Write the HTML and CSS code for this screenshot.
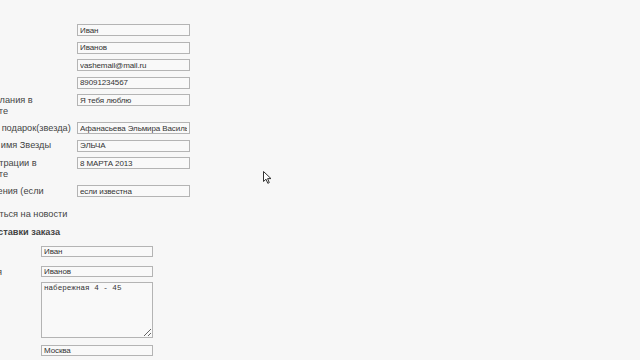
FILE: index.html
```html
<!DOCTYPE html>
<html lang="ru">
<head>
  <meta charset="UTF-8" />
  <title>Оформление заказа</title>
  <link rel="stylesheet" href="styles.css">
</head>
<body>
  <div class="order">
    <div class="row">
      <label for="name">Имя</label>
      <input type="text" id="name" value="Иван" />
    </div>
    <div class="row">
      <label for="surname">Фамилия</label>
      <input type="text" id="surname" value="Иванов" />
    </div>
    <div class="row">
      <label for="email">E-mail</label>
      <input type="text" id="email" value="vashemail@mail.ru" />
    </div>
    <div class="row">
      <label for="phone">Телефон</label>
      <input type="text" id="phone" value="89091234567" />
    </div>
    <div class="row">
      <label for="wish">Текст пожелания в сертификате</label>
      <input type="text" id="wish" value="Я тебя люблю" />
    </div>
    <div class="row">
      <label for="owner">ФИО, кому подарок(звезда)</label>
      <input type="text" id="owner" value="Афанасьева Эльмира Васильевна" />
    </div>
    <div class="row">
      <label for="star">Желаемое имя Звезды</label>
      <input type="text" id="star" value="ЭЛЬЧА" />
    </div>
    <div class="row">
      <label for="regdate">Дата регистрации в сертификате</label>
      <input type="text" id="regdate" value="8 МАРТА 2013" />
    </div>
    <div class="row">
      <label for="birth">Дата рождения (если известна)</label>
      <input type="text" id="birth" value="если известна" />
    </div>
    <div class="row news">
      <label><input type="checkbox" />Подписаться на новости</label>
    </div>

    <h3>Адрес доставки заказа</h3>

    <div class="delivery">
      <div class="row">
        <label for="d-name">Имя</label>
        <input type="text" id="d-name" value="Иван" />
      </div>
      <div class="row">
        <label for="d-surname">Фамилия</label>
        <input type="text" id="d-surname" value="Иванов" />
      </div>
      <div class="row">
        <label for="d-address">Адрес</label>
        <textarea id="d-address">набережная 4 - 45</textarea>
      </div>
      <div class="row">
        <label for="d-city">Город</label>
        <input type="text" id="d-city" value="Москва" />
      </div>
    </div>
  </div>

  <!-- mouse pointer from the capture -->
  <svg class="cursor" width="9" height="13" viewBox="0 0 9 13">
    <path d="M0.5 0.5 L0.5 10.5 L3 8.2 L4.8 12.3 L6.3 11.6 L4.6 7.6 L8 7.6 Z" fill="#fff" stroke="#333" stroke-width="1" />
  </svg>
</body>
</html>
```

FILE: styles.css
```css
body {
  margin: 0;
  background: #f7f7f7;
  font-family: Arial, "Liberation Sans", sans-serif;
  color: #444;
  overflow: hidden;
}
.order {
  margin-left: -47px;
  padding-top: 24px;
}
.row {
  display: flex;
  align-items: flex-start;
  gap: 4px;
  margin-bottom: 5.5px;
}
.row label {
  width: 120px;
  flex-shrink: 0;
  font-size: 9.2px;
  line-height: 11px;
  padding-top: 0.5px;
}
input[type="text"], textarea {
  box-sizing: border-box;
  width: 113px;
  height: 12px;
  margin: 0;
  padding: 0 2px;
  border: 1px solid #b4b4b4;
  border-radius: 0;
  background: #f9f9f9;
  color: #333;
  font-family: Arial, "Liberation Sans", sans-serif;
  font-size: 8px;
  letter-spacing: -0.1px;
}
.news {
  margin-top: -5px;
}
.news label {
  width: auto;
}
.news input {
  width: 9px;
  height: 9px;
  margin: 0 1px 0 0;
  vertical-align: -1px;
}
h3 {
  margin: 6px 0 0 3px;
  font-size: 9.2px;
  line-height: 12px;
}
.delivery {
  margin-left: 10px;
  padding-top: 8px;
}
.delivery .row {
  gap: 6px;
}
.delivery .row label {
  width: 72px;
}
.delivery input[type="text"] {
  width: 112px;
  height: 11px;
}
.delivery .row:nth-child(1) {
  margin-bottom: 9px;
}
.delivery .row:nth-child(2) {
  margin-bottom: 4px;
}
.delivery .row:nth-child(3) {
  margin-bottom: 7px;
}
textarea {
  width: 112px;
  height: 56px;
  padding: 1px 2px;
  font-family: "Liberation Mono", "Courier New", monospace;
  font-size: 7.6px;
  line-height: 8px;
  letter-spacing: 0;
}
.cursor {
  position: absolute;
  left: 263px;
  top: 171px;
}
```
